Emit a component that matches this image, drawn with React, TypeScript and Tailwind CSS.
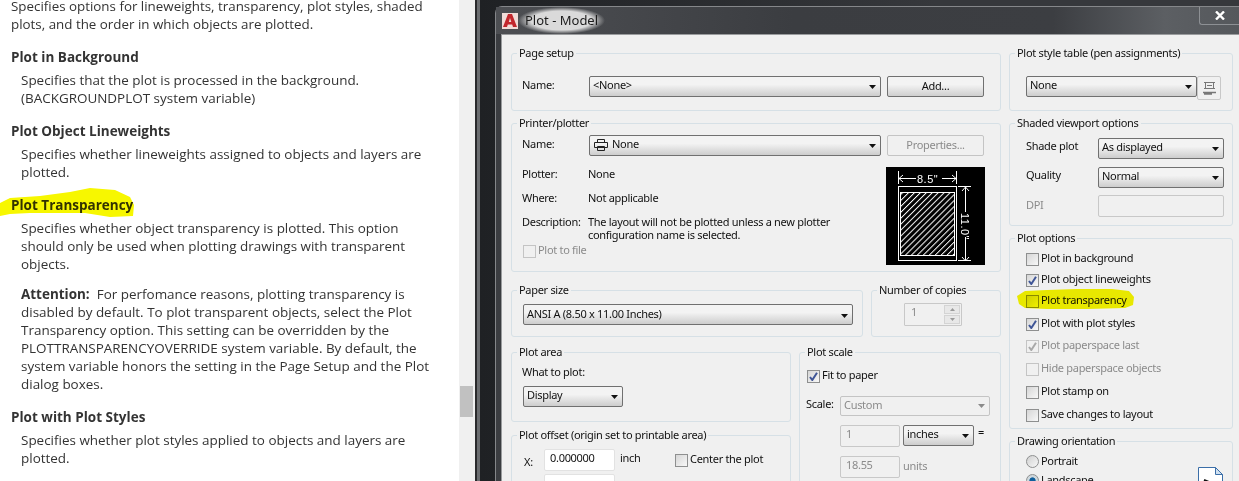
import { ReactNode } from "react";

// group box with the caption sitting on the border
const Group = ({ title, className, children }: { title: string; className: string; children?: ReactNode }) => (
  <div className={`relative rounded-[3px] border border-[#d6e0e6] ${className}`}>
    <span className="absolute left-[5px] top-[-8px] bg-[#f0f0f0] px-[2px] leading-[14px] whitespace-nowrap">{title}</span>
    {children}
  </div>
);

const Arrow = ({ muted }: { muted?: boolean }) => (
  <svg width="7" height="4" viewBox="0 0 7 4" className="ml-auto shrink-0 translate-y-[1px]">
    <path d="M0 0h7L3.5 4z" fill={muted ? "#8a8a8a" : "#111"} />
  </svg>
);

const Combo = ({ className, children, disabled }: { className: string; children?: ReactNode; disabled?: boolean }) => (
  <div
    className={`flex h-[21px] shrink-0 items-center rounded-[2px] border pb-[2px] pl-[3px] pr-[4px] whitespace-nowrap ${
      disabled
        ? "border-[#c4c4c4] bg-[#f0f0f0] text-[#8b8b8b]"
        : "border-[#707070] bg-gradient-to-b from-[#f3f3f3] from-40% to-[#cdcdcd]"
    } ${className}`}
  >
    {children}
    <Arrow muted={disabled} />
  </div>
);

const Button = ({ className, children, disabled }: { className: string; children: ReactNode; disabled?: boolean }) => (
  <div
    className={`ml-[6px] flex h-[21px] shrink-0 items-center justify-center rounded-[2px] border ${
      disabled
        ? "border-[#c4c4c4] text-[#8b8b8b]"
        : "border-[#707070] bg-gradient-to-b from-[#f3f3f3] from-40% to-[#cfcfcf]"
    } ${className}`}
  >
    {children}
  </div>
);

const Field = ({ className, children, white }: { className: string; children?: ReactNode; white?: boolean }) => (
  <div
    className={`flex h-[22px] shrink-0 items-center rounded-[2px] border px-[5px] pb-[4px] ${
      white ? "border-[#e2e2e2] bg-white" : "border-[#c8c8c8] text-[#8b8b8b]"
    } ${className}`}
  >
    {children}
  </div>
);

const Check = ({ checked, disabled }: { checked?: boolean; disabled?: boolean }) => (
  <span
    className={`flex h-[13px] w-[13px] shrink-0 items-center justify-center border ${
      disabled ? "border-[#c4c4c4] bg-[#f0f0f0]" : "border-[#8e8f8f] bg-gradient-to-br from-[#d6d6d6] to-[#f8f8f8]"
    }`}
  >
    {checked && (
      <svg width="9" height="9" viewBox="0 0 9 9">
        <path d="M1 5l2.3 3L8 .8" fill="none" stroke={disabled ? "#a8a8a8" : "#3f5596"} strokeWidth="2" />
      </svg>
    )}
  </span>
);

const Option = ({ label, checked, disabled, className }: { label: string; checked?: boolean; disabled?: boolean; className: string }) => (
  <div className={`flex h-[14px] items-center gap-[2px] whitespace-nowrap ${disabled ? "text-[#8b8b8b]" : ""} ${className}`}>
    <Check checked={checked} disabled={disabled} />
    <span className="mb-[2px]">{label}</span>
  </div>
);

const Radio = ({ on }: { on?: boolean }) => (
  <span
    className={`h-[13px] w-[13px] shrink-0 rounded-full border border-[#8e8f8f] ${
      on ? "bg-[radial-gradient(circle,#0f5f9c_35%,#cfd8dd_45%)]" : "bg-gradient-to-br from-[#d0d0d0] to-[#f8f8f8]"
    }`}
  />
);

const PaperPreview = () => (
  <svg width="99" height="98" viewBox="0 0 99 98" className="mt-[1px] shrink-0 bg-black">
    <defs>
      <pattern id="hatch" width="4.2" height="4.2" patternUnits="userSpaceOnUse" patternTransform="rotate(45)">
        <rect width="1" height="4.2" fill="#fff" />
      </pattern>
    </defs>
    <g stroke="#fff" fill="none" shapeRendering="crispEdges">
      <path d="M12.5 4v13M70.500 4v13M13 11.500h17M56 11.500h14M12.500 19.500h58v74h-58z" />
      <path d="M14.500 25.500h54v63h-54z" />
      <path d="M72 19.500h13M72 93.500h13M79.500 20v25M79.500 70v24" />
    </g>
    <g stroke="#fff" fill="none">
      <path d="M17 8l-4 3.500 4 3.500M66 8l4 3.500-4 3.500M76 24l3.500-4 3.500 4M76 90l3.500 4 3.500-4" />
    </g>
    <rect x="15" y="26" width="53" height="62" fill="url(#hatch)" />
    <text x="31" y="16" fill="#fff" fontSize="11" fontFamily="'Liberation Sans',sans-serif" letterSpacing="0.5">8.5"</text>
    <text x="0" y="0" fill="#fff" fontSize="11" fontFamily="'Liberation Sans',sans-serif" letterSpacing="0.5" transform="translate(75 46) rotate(90)">11.0"</text>
  </svg>
);

const Row = ({ className, children }: { className: string; children: ReactNode }) => (
  <div className={`flex items-center whitespace-nowrap ${className}`}>{children}</div>
);

const Doc = () => (
  <div className="relative h-full w-[459px] shrink-0 bg-white pl-[11px] font-['Open_Sans',sans-serif] text-[13.46px] leading-[18px] text-[#333]">
    <svg width="140" height="32" viewBox="0 0 140 32" className="absolute left-0 top-[187px] mix-blend-multiply">
      <path d="M0 16L10 11 40 9 70 5 90 1 115 3 130 10 134 18 133 29 110 30 85 26 56 26 30 26 10 27 0 29z" fill="#f7f700" />
    </svg>
    <p className="mt-[-3px] text-[13.37px]">
      Specifies options for lineweights, transparency, plot styles, shaded
      <br />
      plots, and the order in which objects are plotted.
    </p>
    <h3 className="mt-[15px] text-[13.5px] font-bold">Plot in Background</h3>
    <p className="ml-[10px] mt-[5px]">
      Specifies that the plot is processed in the background.
      <br />
      (BACKGROUNDPLOT system variable)
    </p>
    <h3 className="mt-[15px] text-[13.5px] font-bold">Plot Object Lineweights</h3>
    <p className="ml-[10px] mt-[5px]">
      Specifies whether lineweights assigned to objects and layers are
      <br />
      plotted.
    </p>
    <h3 className="mt-[15px] text-[13.5px] font-bold">Plot Transparency</h3>
    <p className="ml-[10px] mt-[5px]">
      Specifies whether object transparency is plotted. This option
      <br />
      should only be used when plotting drawings with transparent
      <br />
      objects.
    </p>
    <p className="ml-[10px] mt-[12px]">
      <b>Attention:</b>&nbsp; For perfomance reasons, plotting transparency is
      <br />
      disabled by default. To plot transparent objects, select the Plot
      <br />
      Transparency option. This setting can be overridden by the
      <br />
      PLOTTRANSPARENCYOVERRIDE system variable. By default, the
      <br />
      system variable honors the setting in the Page Setup and the Plot
      <br />
      dialog boxes.
    </p>
    <h3 className="mt-[15px] text-[13.5px] font-bold">Plot with Plot Styles</h3>
    <p className="ml-[10px] mt-[5px]">
      Specifies whether plot styles applied to objects and layers are
      <br />
      plotted.
    </p>
  </div>
);

const TitleBar = () => (
  <div className="relative flex h-[27px] items-center bg-[linear-gradient(90deg,#4d4f53_0%,#3b3d41_40%,#3c3e42_75%,#5c5f63_90%,#55585c_100%)] pl-[6px]">
    <span className="flex h-[16px] w-[16px] items-center justify-center bg-[#f1dcd8]">
      <svg width="14" height="13" viewBox="0 0 14 13">
        <path d="M5 0h4l5 13h-4l-.8-2.500H4.800L4 13H0zM7 4L5.800 8h2.500z" fill="#c2272d" fillRule="evenodd" />
      </svg>
    </span>
    <span className="flex h-full items-center bg-[radial-gradient(closest-side,#dadada_70%,transparent_100%)] px-[7px] font-['Noto_Sans',sans-serif] text-[13px] text-[#1c1c1c]">
      Plot - Model
    </span>
    <div className="absolute right-0 top-0 flex h-[18px] w-[40px] items-center justify-center rounded-bl-[3px] border-b border-l border-[#8d9094]">
      <svg width="10" height="9" viewBox="0 0 10 9">
        <path d="M1 0.500l8 8M9 0.500l-8 8" stroke="#fff" strokeWidth="2.400" />
      </svg>
    </div>
  </div>
);

const LeftColumn = () => (
  <div className="w-[490px] shrink-0">
    <Group title="Page setup" className="h-[58px]">
      <Row className="pl-[10px] pt-[22px]">
        <span className="mb-[3px] w-[67px]">Name:</span>
        <Combo className="w-[292px]">&lt;None&gt;</Combo>
        <Button className="w-[97px]">Add...</Button>
      </Row>
    </Group>

    <Group title="Printer/plotter" className="mt-[12px] h-[149px]">
      <Row className="pl-[10px] pt-[11px]">
        <span className="mb-[3px] w-[67px]">Name:</span>
        <Combo className="w-[292px]">
          <svg width="14" height="12" viewBox="0 0 14 12" className="ml-[1px] mr-[4px]" fill="none" stroke="#222">
            <path d="M3.500 3.500v-3h7v3M.5 3.500h13v5h-13zM3.500 7.500h7v4h-7z" />
          </svg>
          None
        </Combo>
        <Button disabled className="w-[97px]">Properties...</Button>
      </Row>
      <div className="flex pl-[10px] pt-[10px]">
        <div className="w-[364px]">
          <Row className="mt-[1px] h-[14px]">
            <span className="w-[66px]">Plotter:</span>None
          </Row>
          <Row className="mt-[10px] h-[14px]">
            <span className="w-[66px]">Where:</span>Not applicable
          </Row>
          <div className="mt-[10px] flex leading-[13px]">
            <span className="w-[66px]">Description:</span>
            <span>
              The layout will not be plotted unless a new plotter
              <br />
              configuration name is selected.
            </span>
          </div>
          <Option disabled label="Plot to file" className="ml-[1px] mt-[3px]" />
        </div>
        <PaperPreview />
      </div>
    </Group>

    <div className="mt-[18px] flex gap-[8px]">
      <Group title="Paper size" className="h-[47px] w-[352px]">
        <Combo className="ml-[11px] mt-[13px] w-[330px] !pb-0">ANSI A (8.50 x 11.00 Inches)</Combo>
      </Group>
      <Group title="Number of copies" className="h-[47px] w-[130px]">
        <div className="ml-[32px] mt-[12px] flex h-[23px] w-[58px] items-center rounded-[1px] border border-[#c8c8c8] pl-[6px] text-[#8b8b8b]">
          <span className="mb-[4px]">1</span>
          <span className="ml-auto mr-[1px] flex w-[16px] flex-col gap-[1px] self-stretch py-[1px]">
            <span className="flex flex-1 items-center justify-center border border-[#d4d4d4] bg-[#e8e8e8]">
              <svg width="5" height="3" viewBox="0 0 5 3"><path d="M0 3L2.500 0 5 3z" fill="#9a9a9a" /></svg>
            </span>
            <span className="flex flex-1 items-center justify-center border border-[#d4d4d4] bg-[#e8e8e8]">
              <svg width="5" height="3" viewBox="0 0 5 3"><path d="M0 0h5L2.500 3z" fill="#9a9a9a" /></svg>
            </span>
          </span>
        </div>
      </Group>
    </div>

    <div className="mt-[15px] flex gap-[8px]">
      <div className="w-[280px] shrink-0">
        <Group title="Plot area" className="h-[70px]">
          <div className="pl-[10px] pt-[12px] leading-[14px]">What to plot:</div>
          <Combo className="ml-[11px] mt-[7px] w-[100px]">Display</Combo>
        </Group>
        <Group title="Plot offset (origin set to printable area)" className="mt-[13px] h-[90px]">
          <Row className="pl-[12px] pt-[13px]">
            <span className="mt-[5px] w-[20px]">X:</span>
            <Field white className="w-[71px]">0.000000</Field>
            <span className="mb-[4px] ml-[5px] w-[55px]">inch</span>
            <Option label="Center the plot" className="" />
          </Row>
          <Row className="pl-[32px] pt-[3px]">
            <Field white className="w-[71px]" />
          </Row>
        </Group>
      </div>
      <Group title="Plot scale" className="h-[150px] w-[202px]">
        <Option checked label="Fit to paper" className="ml-[7px] mt-[16px]" />
        <Row className="ml-[6px] mt-[13px]">
          <span className="mb-[3px] w-[34px]">Scale:</span>
          <Combo disabled className="!h-[20px] w-[150px]">Custom</Combo>
        </Row>
        <Row className="ml-[40px] mt-[9px] !items-start">
          <Field className="w-[60px]">1</Field>
          <Combo className="ml-[3px] w-[71px]">inches</Combo>
          <span className="ml-[4px] leading-[14px]">=</span>
        </Row>
        <Row className="ml-[40px] mt-[9px]">
          <Field className="w-[60px]">18.55</Field>
          <span className="mb-[2px] ml-[3px] text-[#8b8b8b]">units</span>
        </Row>
      </Group>
    </div>
  </div>
);

const plotOptions = [
  { label: "Plot in background", mt: "mt-[13px]" },
  { label: "Plot object lineweights", checked: true, mt: "mt-[7px]" },
  { label: "Plot transparency", mt: "mt-[7px]" },
  { label: "Plot with plot styles", checked: true, mt: "mt-[9px]" },
  { label: "Plot paperspace last", checked: true, disabled: true, mt: "mt-[8px]" },
  { label: "Hide paperspace objects", disabled: true, mt: "mt-[9px]" },
  { label: "Plot stamp on", mt: "mt-[9px]" },
  { label: "Save changes to layout", mt: "mt-[9px]" },
];

const RightColumn = () => (
  <div className="w-[224px] shrink-0">
    <Group title="Plot style table (pen assignments)" className="h-[58px]">
      <Row className="pl-[16px] pt-[22px] !items-start">
        <Combo className="w-[171px]">None</Combo>
        <div className="flex h-[24px] w-[24px] items-center justify-center rounded-[2px] border border-[#c8c8c8]">
          <svg width="13" height="13" viewBox="0 0 13 13" fill="none" stroke="#777">
            <path d="M1 .5h11M2.500 .5v6M10.500 .5v6M1 6.500h11M4 3.500h5" />
            <path d="M0 10.500h13M1 12h8" strokeWidth="1.500" />
          </svg>
        </div>
      </Row>
    </Group>

    <Group title="Shaded viewport options" className="mt-[12px] h-[103px]">
      <Row className="pl-[16px] pt-[14px]">
        <span className="mb-[4px] w-[72px]">Shade plot</span>
        <Combo className="w-[126px]">As displayed</Combo>
      </Row>
      <Row className="pl-[16px] pt-[8px]">
        <span className="mb-[4px] w-[72px]">Quality</span>
        <Combo className="w-[126px]">Normal</Combo>
      </Row>
      <Row className="pl-[16px] pt-[7px]">
        <span className="mb-[2px] w-[72px] text-[#8b8b8b]">DPI</span>
        <Field className="w-[126px]" />
      </Row>
    </Group>

    <Group title="Plot options" className="relative mt-[12px] h-[191px]">
      <svg width="117" height="22" viewBox="0 0 117 22" className="absolute left-[7px] top-[49px] mix-blend-multiply">
        <path d="M0 8L8 3 30 2 60 1 95 1 112 3 117 9 116 17 108 20 70 21 30 21 8 20 2 16z" fill="#f7f700" />
      </svg>
      <div className="pl-[16px]">
        {plotOptions.map((item) => (
          <Option key={item.label} label={item.label} checked={item.checked} disabled={item.disabled} className={item.mt} />
        ))}
      </div>
    </Group>

    <Group title="Drawing orientation" className="mt-[12px] h-[60px]">
      <div className="flex pl-[16px]">
        <div className="w-[172px]">
          <div className="mt-[12px] flex h-[14px] items-center gap-[2px]">
            <Radio />
            Portrait
          </div>
          <div className="mt-[5px] flex h-[14px] items-center gap-[2px]">
            <Radio on />
            Landscape
          </div>
        </div>
        <svg width="25" height="34" viewBox="0 0 25 34" className="mt-[25px]">
          <path d="M.5.5h17l7 7v26H.5z" fill="#fff" stroke="#3b6ea8" />
          <path d="M17.500.5v7h7z" fill="#cfe0f0" stroke="#3b6ea8" />
          <path d="M6 13l10 4" stroke="#111" strokeWidth="2" />
        </svg>
      </div>
    </Group>
  </div>
);

export default function App() {
  return (
    <div className="flex h-[481px] w-[1239px] overflow-hidden bg-white">
      <Doc />
      <div className="relative w-[16px] shrink-0 bg-[#f0f0f0]">
        <div className="absolute left-[1px] top-[386px] h-[31px] w-[13px] bg-[#c1c1c1]" />
      </div>
      <div className="flex min-w-0 flex-1 bg-[#24262a]">
        <div className="h-full w-[2px] shrink-0 bg-[#2a2a2c]" />
        <div className="h-full w-[3px] shrink-0 bg-[#6a6c6f]" />
        <div className="h-full min-w-0 flex-1 bg-[linear-gradient(90deg,#1f2124,#36383c_60%)] pl-[15px] pt-[6px]">
          <div className="h-full rounded-tl-[7px] border-l border-t border-[#85878a] bg-[#3b3d41]">
            <TitleBar />
            <div className="ml-[5px] h-full border-l border-t border-[#9a9c9e] bg-[#f0f0f0] font-['Noto_Sans',sans-serif] text-[11px] tracking-[-0.3px] text-[#111]">
              <div className="flex gap-[8px] pl-[9px] pt-[18px]">
                <LeftColumn />
                <RightColumn />
              </div>
            </div>
          </div>
        </div>
      </div>
    </div>
  );
}
